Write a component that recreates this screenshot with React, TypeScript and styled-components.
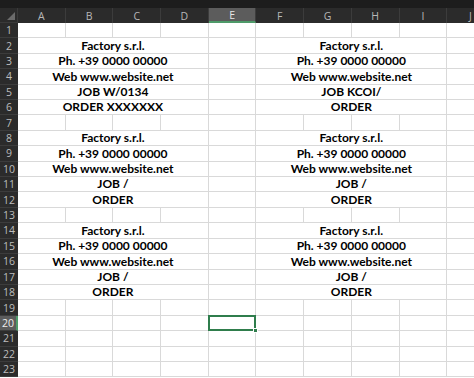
import styled, { createGlobalStyle, css } from "styled-components";

/* ─── Data ─── */

const COLUMNS = ["A", "B", "C", "D", "E", "F", "G", "H", "I", "J"];
const ROW_COUNT = 23;
const ACTIVE_COL = "E";
const ACTIVE_ROW = 20;

const header = ["Factory s.r.l.", "Ph. +39 0000 00000", "Web www.website.net"];

// each label block starts at a row and spans 5 rows
const blocks: { start: number; left: string[]; right: string[] }[] = [
  {
    start: 2,
    left: [...header, "JOB W/0134", "ORDER XXXXXXX"],
    right: [...header, "JOB KCOI/", "ORDER"],
  },
  {
    start: 8,
    left: [...header, "JOB /", "ORDER"],
    right: [...header, "JOB /", "ORDER"],
  },
  {
    start: 14,
    left: [...header, "JOB /", "ORDER"],
    right: [...header, "JOB /", "ORDER"],
  },
];

function labelRow(row: number) {
  for (const b of blocks) {
    const i = row - b.start;
    if (i >= 0 && i < b.left.length) return { left: b.left[i], right: b.right[i] };
  }
  return null;
}

/* ─── Styled Components ─── */

const GlobalStyle = createGlobalStyle`
  html, body {
    margin: 0;
    padding: 0;
    background: #ffffff;
    overflow: hidden;
  }
`;

const Window = styled.div`
  width: 474px;
  height: 378px;
  overflow: hidden;
  background: #ffffff;
  display: flex;
  flex-direction: column;
`;

const TopStrip = styled.div`
  height: 8px;
  flex: none;
  background: #1d1d1d;
`;

const Sheet = styled.div`
  display: grid;
  grid-template-columns: 18px repeat(10, 47.7px);
  grid-template-rows: 15px;
  grid-auto-rows: 15.42px;
  font-family: Lato, "Liberation Sans", sans-serif;
`;

const Corner = styled.div`
  position: relative;
  background: #2b2b2b;
  border-right: 1px solid #3a3a3a;
  border-bottom: 1px solid #3a3a3a;

  &::after {
    content: "";
    position: absolute;
    right: 2px;
    bottom: 2px;
    width: 0;
    height: 0;
    border-left: 8px solid transparent;
    border-bottom: 8px solid #6b6b6b;
  }
`;

const ColHeader = styled.div<{ $active?: boolean }>`
  display: flex;
  align-items: center;
  justify-content: center;
  font-family: "Open Sans", "Liberation Sans", sans-serif;
  font-size: 10.5px;
  color: #b8b8b8;
  background: #2b2b2b;
  border-right: 1px solid #3c3c3c;
  ${(p) =>
    p.$active &&
    css`
      background: #5c5c5c;
      color: #e6e6e6;
      border-bottom: 2px solid #4e9a69;
      box-sizing: border-box;
    `}
`;

const RowHeader = styled.div<{ $active?: boolean }>`
  display: flex;
  align-items: center;
  justify-content: center;
  font-family: "Open Sans", "Liberation Sans", sans-serif;
  font-size: 10.5px;
  color: #bdbdbd;
  background: #2b2b2b;
  border-bottom: 1px solid #3c3c3c;
  box-sizing: border-box;
  ${(p) =>
    p.$active &&
    css`
      background: #5c5c5c;
      color: #ececec;
      border-right: 2px solid #4e9a69;
    `}
`;

const Cell = styled.div<{ $span?: number; $selected?: boolean }>`
  position: relative;
  grid-column: span ${(p) => p.$span ?? 1};
  display: flex;
  align-items: flex-end;
  justify-content: center;
  box-sizing: border-box;
  border-right: 1px solid #d9d9d9;
  border-bottom: 1px solid #d9d9d9;
  font-size: 12px;
  font-weight: 700;
  color: #000000;
  line-height: 14px;
  white-space: nowrap;
  overflow: hidden;

  ${(p) =>
    p.$selected &&
    css`
      overflow: visible;
      &::before {
        content: "";
        position: absolute;
        left: -1px;
        top: -1px;
        right: -1px;
        bottom: -1px;
        border: 2px solid #2f7d4c;
        z-index: 1;
      }
      &::after {
        content: "";
        position: absolute;
        right: -3px;
        bottom: -3px;
        width: 5px;
        height: 5px;
        background: #2f7d4c;
        border: 1px solid #ffffff;
        box-sizing: border-box;
        z-index: 2;
      }
    `}
`;

/* ─── Component ─── */

export default function App() {
  const rows = Array.from({ length: ROW_COUNT }, (_, i) => i + 1);

  return (
    <Window>
      <GlobalStyle />
      <TopStrip />
      <Sheet>
        <Corner />
        {COLUMNS.map((c) => (
          <ColHeader key={c} $active={c === ACTIVE_COL}>
            {c}
          </ColHeader>
        ))}

        {rows.map((r) => {
          const label = labelRow(r);
          return [
            <RowHeader key={`h${r}`} $active={r === ACTIVE_ROW}>
              {r}
            </RowHeader>,
            ...(label
              ? [
                  <Cell key={`l${r}`} $span={4}>
                    {label.left}
                  </Cell>,
                  <Cell key={`e${r}`} />,
                  <Cell key={`r${r}`} $span={4}>
                    {label.right}
                  </Cell>,
                  <Cell key={`j${r}`} />,
                ]
              : COLUMNS.map((c) => (
                  <Cell
                    key={`${c}${r}`}
                    $selected={c === ACTIVE_COL && r === ACTIVE_ROW}
                  />
                ))),
          ];
        })}
      </Sheet>
    </Window>
  );
}
